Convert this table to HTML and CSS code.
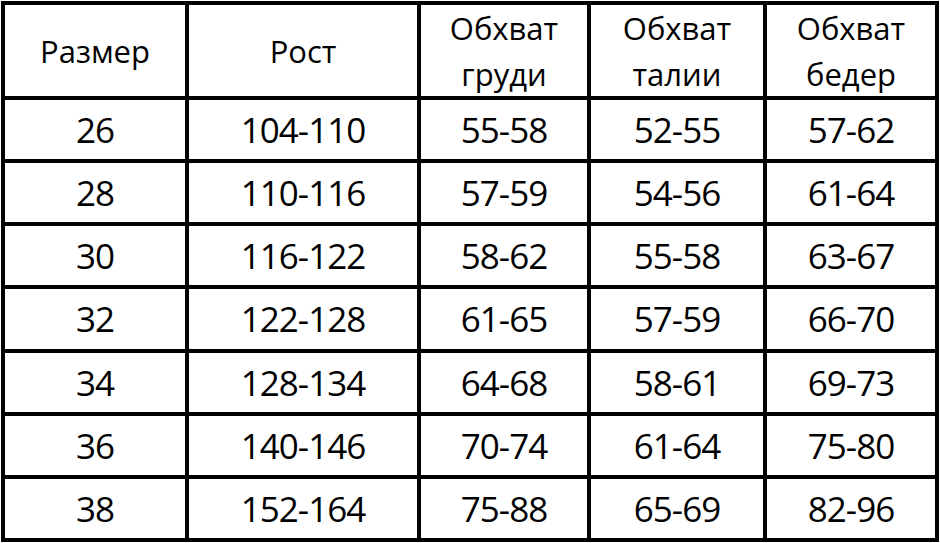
FILE: index.html
```html
<!DOCTYPE html>
<html lang="ru">
<head>
<meta charset="utf-8">
<link rel="stylesheet" href="styles.css">
</head>
<body>
<div class="sizes">
  <div class="cell head">Размер</div>
  <div class="cell head">Рост</div>
  <div class="cell head">Обхват<br>груди</div>
  <div class="cell head">Обхват<br>талии</div>
  <div class="cell head">Обхват<br>бедер</div>

  <div class="cell">26</div><div class="cell">104-110</div><div class="cell">55-58</div><div class="cell">52-55</div><div class="cell">57-62</div>
  <div class="cell">28</div><div class="cell">110-116</div><div class="cell">57-59</div><div class="cell">54-56</div><div class="cell">61-64</div>
  <div class="cell">30</div><div class="cell">116-122</div><div class="cell">58-62</div><div class="cell">55-58</div><div class="cell">63-67</div>
  <div class="cell">32</div><div class="cell">122-128</div><div class="cell">61-65</div><div class="cell">57-59</div><div class="cell">66-70</div>
  <div class="cell">34</div><div class="cell">128-134</div><div class="cell">64-68</div><div class="cell">58-61</div><div class="cell">69-73</div>
  <div class="cell">36</div><div class="cell">140-146</div><div class="cell">70-74</div><div class="cell">61-64</div><div class="cell">75-80</div>
  <div class="cell">38</div><div class="cell">152-164</div><div class="cell">75-88</div><div class="cell">65-69</div><div class="cell">82-96</div>
</div>
</body>
</html>
```
FILE: styles.css
```css
html, body {
  margin: 0;
  padding: 0;
  background: #ffffff;
}
body {
  padding: 1px 0 0 1px;
}
.sizes {
  display: grid;
  grid-template-columns: 180px 228px 166px 172px 168px;
  grid-template-rows: 91px repeat(7, 1fr);
  gap: 4px;
  padding: 4px;
  width: 930px;
  height: 533px;
  box-sizing: content-box;
  background: #000000;
  font-family: "Open Sans", "Noto Sans", sans-serif;
  color: #000000;
}
.cell {
  background: #ffffff;
  display: flex;
  align-items: center;
  justify-content: center;
  text-align: center;
  font-size: 35px;
  letter-spacing: -1px;
  line-height: 1;
}
.head {
  font-size: 31px;
  letter-spacing: 0;
  line-height: 46px;
}
```
